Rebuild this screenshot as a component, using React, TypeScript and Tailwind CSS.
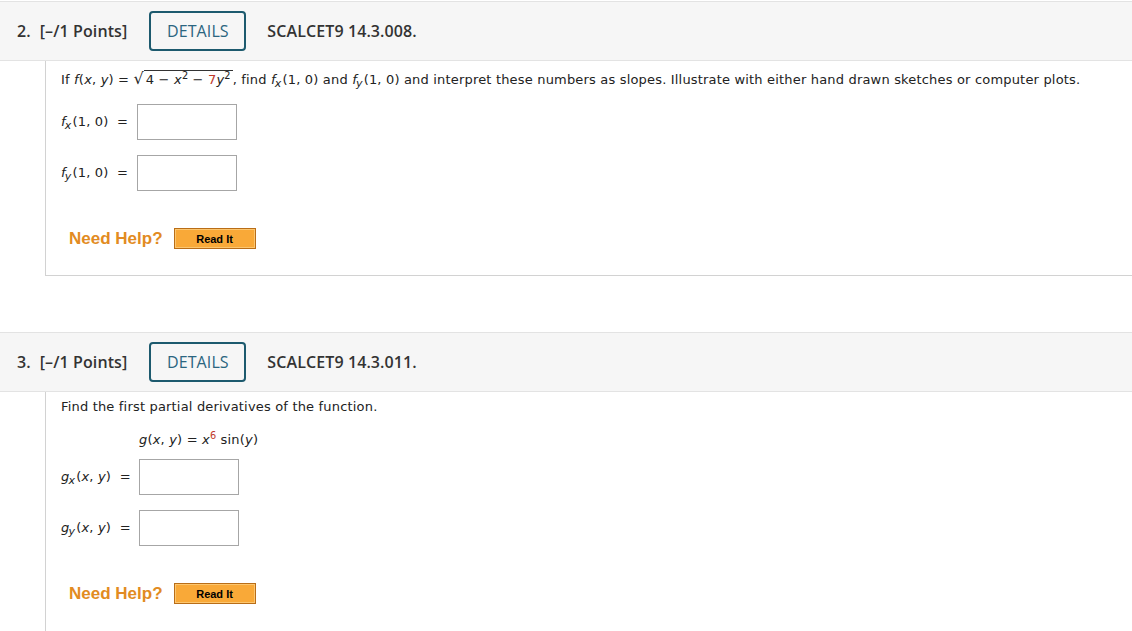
const Sub = ({ base, sub }: { base: string; sub: string }) => (
  <span>
    <i>{base}</i>
    <sub className="relative -left-[1px] text-[11px] italic">{sub}</sub>
  </span>
);

const Header = ({ num, code }: { num: string; code: string }) => (
  <div className="flex h-[60px] items-center border-y border-[#e3e3e3] bg-[#f6f6f6] font-[family-name:'Open_Sans',sans-serif] text-[16px] tracking-[0.1px]">
    <span className="ml-[17px] font-semibold text-[#333]">{num}</span>
    <span className="ml-[9px] font-semibold text-[#333]">[–/1 Points]</span>
    <button className="ml-[22px] flex h-[40px] w-[97px] items-center justify-center rounded-[4px] border-2 border-[#1d5a6e] font-medium text-[#2b6580]">
      DETAILS
    </button>
    <span className="ml-[21px] font-semibold text-[#333]">{code}</span>
  </div>
);

const Box = () => <div className="h-[36px] w-[100px] border border-[#a6a6a6] bg-white" />;

const Help = () => (
  <div className="flex items-center pl-[8px] tracking-normal">
    <span className="font-[family-name:'Liberation_Sans',sans-serif] text-[17px] font-bold text-[#e28b22]">
      Need Help?
    </span>
    <button className="ml-[11px] h-[21px] w-[82px] border border-[#b96d17] bg-[#f9a938] p-0">
      <div className="flex h-full items-center justify-center border border-[#fcc66f] font-[family-name:'Liberation_Sans',sans-serif] text-[11px] font-bold text-black">
        Read It
      </div>
    </button>
  </div>
);

export default function App() {
  return (
    <div className="min-h-screen bg-white pt-px font-[family-name:'DejaVu_Sans',Verdana,sans-serif] text-[13px] tracking-[0.18px] text-[#222]">
      <Header num="2." code="SCALCET9 14.3.008." />
      <div className="ml-[45px] h-[215px] border-b border-l border-[#d2d2d2] pl-[15px] pt-[9px]">
        <p className="whitespace-nowrap leading-[18px]">
          If <i>f</i>(<i>x</i>, <i>y</i>) ={" "}
          <span className="text-[16px]">√</span>
          <span className="inline-block border-t border-[#333] px-[2px] pt-[1px] leading-[15px]">
            4 − <i>x</i>
            <sup>2</sup> − <span className="text-[#c0392b]">7</span>
            <i>y</i>
            <sup>2</sup>
          </span>
          , find <Sub base="f" sub="x" />(1, 0) and <Sub base="f" sub="y" />(1, 0) and interpret these numbers as
          slopes. Illustrate with either hand drawn sketches or computer plots.
        </p>
        <div className="mt-[15px] flex items-center">
          <span className="w-[76px]">
            <Sub base="f" sub="x" />(1, 0) &nbsp;=
          </span>
          <Box />
        </div>
        <div className="mt-[15px] flex items-center">
          <span className="w-[76px]">
            <Sub base="f" sub="y" />(1, 0) &nbsp;=
          </span>
          <Box />
        </div>
        <div className="mt-[35px]">
          <Help />
        </div>
      </div>

      <div className="mt-[56px]">
        <Header num="3." code="SCALCET9 14.3.011." />
      </div>
      <div className="ml-[45px] h-[240px] border-b border-l border-[#d2d2d2] pl-[15px] pt-[6px]">
        <p className="leading-[18px]">Find the first partial derivatives of the function.</p>
        <p className="mt-[15px] pl-[78px] leading-[18px]">
          <i>g</i>(<i>x</i>, <i>y</i>) = <i>x</i>
          <sup className="text-[#c0392b]">6</sup> sin(<i>y</i>)
        </p>
        <div className="mt-[10px] flex items-center">
          <span className="w-[78px]">
            <Sub base="g" sub="x" />(<i>x</i>, <i>y</i>) &nbsp;=
          </span>
          <Box />
        </div>
        <div className="mt-[15px] flex items-center">
          <span className="w-[78px]">
            <Sub base="g" sub="y" />(<i>x</i>, <i>y</i>) &nbsp;=
          </span>
          <Box />
        </div>
        <div className="mt-[35px]">
          <Help />
        </div>
      </div>
    </div>
  );
}
